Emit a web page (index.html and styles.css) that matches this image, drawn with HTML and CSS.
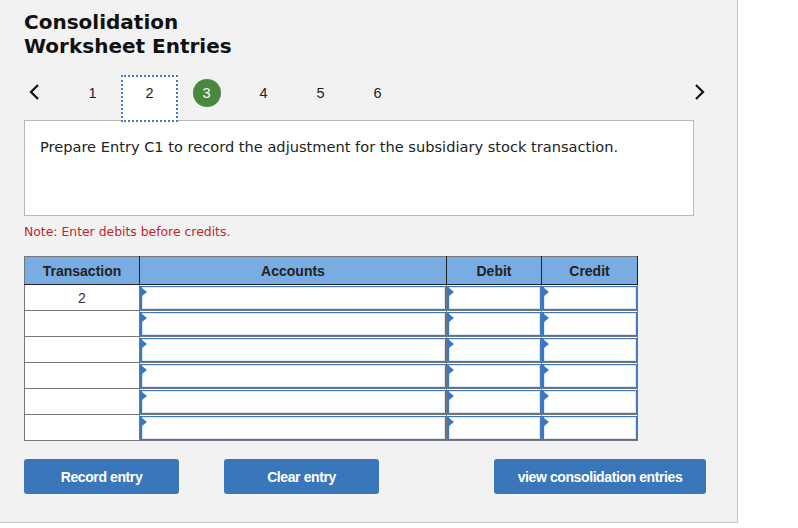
FILE: index.html
```html
<!DOCTYPE html>
<html>
<head>
<meta charset="utf-8">
<link rel="stylesheet" href="styles.css">
</head>
<body>
<div class="panel">
  <h1 class="title">Consolidation<br>Worksheet Entries</h1>
  <div class="nav">
    <div class="nav-arrow prev">
      <svg width="12" height="18" viewBox="0 0 12 18"><polyline points="10,2 3,9 10,16" fill="none" stroke="#111" stroke-width="2.2"/></svg>
    </div>
    <div class="nav-item"><span class="num">1</span></div>
    <div class="nav-item current"><span class="num">2</span></div>
    <div class="nav-item"><span class="num done">3</span></div>
    <div class="nav-item"><span class="num">4</span></div>
    <div class="nav-item"><span class="num">5</span></div>
    <div class="nav-item"><span class="num">6</span></div>
    <div class="nav-spacer"></div>
    <div class="nav-arrow next">
      <svg width="12" height="18" viewBox="0 0 12 18"><polyline points="2,2 9,9 2,16" fill="none" stroke="#111" stroke-width="2.2"/></svg>
    </div>
  </div>
  <div class="prompt">Prepare Entry C1 to record the adjustment for the subsidiary stock transaction.</div>
  <div class="note">Note: Enter debits before credits.</div>
  <table class="grid">
    <thead>
      <tr><th class="c-tr">Transaction</th><th class="c-ac">Accounts</th><th class="c-db">Debit</th><th class="c-cr">Credit</th></tr>
    </thead>
    <tbody>
      <tr><td class="tr">2</td><td><div class="inp"></div></td><td><div class="inp"></div></td><td><div class="inp"></div></td></tr>
      <tr><td class="tr"></td><td><div class="inp"></div></td><td><div class="inp"></div></td><td><div class="inp"></div></td></tr>
      <tr><td class="tr"></td><td><div class="inp"></div></td><td><div class="inp"></div></td><td><div class="inp"></div></td></tr>
      <tr><td class="tr"></td><td><div class="inp"></div></td><td><div class="inp"></div></td><td><div class="inp"></div></td></tr>
      <tr><td class="tr"></td><td><div class="inp"></div></td><td><div class="inp"></div></td><td><div class="inp"></div></td></tr>
      <tr><td class="tr"></td><td><div class="inp"></div></td><td><div class="inp"></div></td><td><div class="inp"></div></td></tr>
    </tbody>
  </table>
  <div class="buttons">
    <button class="btn b-record">Record entry</button>
    <button class="btn b-clear">Clear entry</button>
    <button class="btn b-view">view consolidation entries</button>
  </div>
</div>
</body>
</html>
```

FILE: styles.css
```css
html, body {
  margin: 0;
  padding: 0;
  background: #ffffff;
}
.panel {
  box-sizing: border-box;
  width: 738px;
  height: 523px;
  background: #f2f2f2;
  border-right: 1px solid #c6c6c6;
  border-bottom: 1px solid #c6c6c6;
  padding: 10px 0 0 24px;
  font-family: "DejaVu Sans", Verdana, sans-serif;
}
.title {
  margin: 0;
  font-size: 20px;
  line-height: 24px;
  font-weight: bold;
  color: #111;
}
.nav {
  display: flex;
  align-items: flex-start;
  height: 45px;
  margin-top: 17px;
  width: 690px;
  font-family: "Liberation Sans", Arial, sans-serif;
  font-size: 14.5px;
  color: #222;
}
.nav-arrow {
  box-sizing: border-box;
  width: 40px;
  height: 36px;
  padding-top: 8px;
}
.nav-arrow.prev { padding-left: 4px; }
.nav-arrow.next { width: 20px; }
.nav-item {
  box-sizing: border-box;
  width: 57px;
  height: 47px;
  border: 2px solid transparent;
  padding-top: 2px;
  display: flex;
  align-items: flex-start;
  justify-content: center;
}
.nav-item.current {
  background: #fff;
  border: 2px dotted #3f7cc4;
}
.num {
  display: block;
  height: 28px;
  line-height: 28px;
  text-align: center;
}
.num.done {
  width: 28px;
  border-radius: 50%;
  background: #4a8840;
  color: #fff;
}
.nav-spacer { flex: 1; }
.prompt {
  box-sizing: border-box;
  width: 670px;
  height: 96px;
  background: #fff;
  border: 1px solid #b9b9b9;
  padding: 17px 15px;
  font-size: 14.6px;
  color: #222;
}
.note {
  margin-top: 8px;
  font-size: 12.4px;
  color: #c0272d;
  height: 16px;
  line-height: 16px;
}
.grid {
  margin-top: 16px;
  border-collapse: collapse;
  width: 614px;
  font-family: "Liberation Sans", Arial, sans-serif;
}
.grid th {
  background: #78ace3;
  height: 27px;
  padding: 0;
  font-size: 14px;
  font-weight: bold;
  color: #222;
  border: 1px solid #222;
  border-top-color: #777;
}
.grid th.c-tr { border-left-color: #777; width: 114px; }
.grid th.c-ac { width: 306px; }
.grid th.c-db { width: 94px; }
.grid th.c-cr { width: 95px; }
.grid td {
  height: 25px;
  padding: 0;
  border: 1px solid #777;
  background: #fff;
}
.grid td.tr {
  text-align: center;
  font-size: 14px;
  color: #333;
}
.inp {
  position: relative;
  box-sizing: border-box;
  height: 24px;
  margin: 1px 0 0 0;
  border: 1px solid #3b77bf;
  border-left: 2px solid #3b77bf;
  box-shadow: inset 0 0 0 1px #dbe8f7;
  background: #fff;
}
.inp::before {
  content: "";
  position: absolute;
  left: 0;
  top: 1px;
  width: 0;
  height: 0;
  border-top: 4px solid transparent;
  border-bottom: 4px solid transparent;
  border-left: 5px solid #3b77bf;
}
.buttons {
  display: flex;
  margin-top: 18px;
  width: 682px;
}
.btn {
  height: 35px;
  border: none;
  border-radius: 3px;
  background: #3a76ba;
  color: #fff;
  font-family: "Liberation Sans", Arial, sans-serif;
  font-size: 14px;
  font-weight: bold;
  letter-spacing: -0.4px;
  padding: 0;
}
.b-record { width: 155px; }
.b-clear { width: 155px; margin-left: 45px; }
.b-view { width: 212px; margin-left: auto; }
```
